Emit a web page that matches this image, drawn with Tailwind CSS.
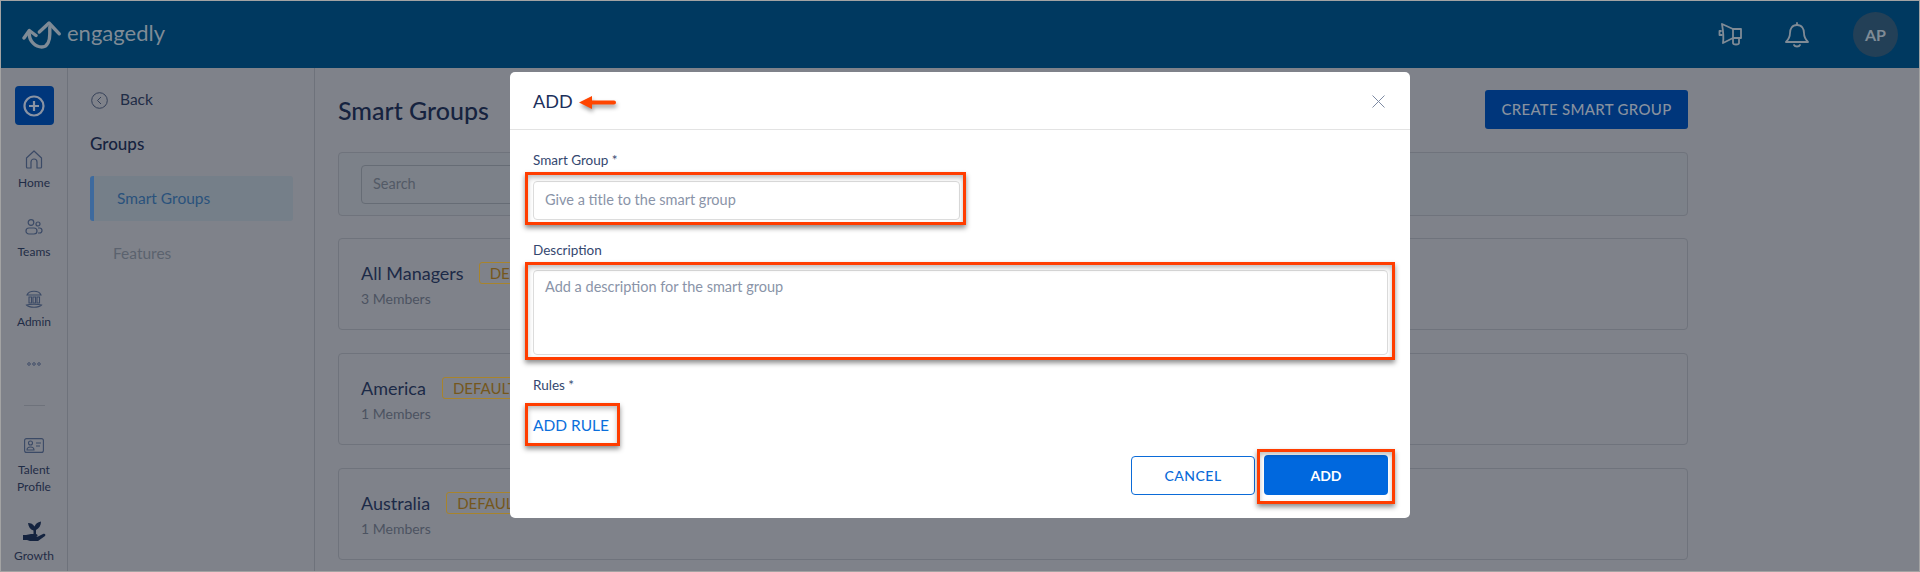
<!DOCTYPE html>
<html lang="en">
<head>
  <script src="https://cdn.jsdelivr.net/npm/@tailwindcss/browser@4"></script>
  <meta charset="UTF-8" />
  <title>Smart Groups</title>
</head>
<body class="bg-[#7f828a] font-['Lato',sans-serif] text-[#1c2a47]">

<div class="relative w-[1920px] h-[572px] overflow-hidden flex flex-col border border-[#a3a3a3] bg-[#7f828a]">

  <!-- Top bar -->
  <header class="h-[67px] shrink-0 bg-[#003960] flex items-center justify-between">
    <div class="flex items-center pl-[21px]">
      <svg class="w-[40px] h-[30px]" viewBox="0 0 40 30" fill="none" stroke="#7f8b96" stroke-width="3.4" stroke-linecap="round" stroke-linejoin="round">
        <path d="M2 18l5.300-7.500 6.700 5" />
        <path d="M7.300 14c0 7 6 13 12.500 13 6 0 8-7 8-13V7" />
        <path d="M17.300 12L27 3l10.300 10.800" />
      </svg>
      <span class="ml-[5px] text-[22px] leading-none text-[#7f8b96] pb-[3px]">engagedly</span>
    </div>
    <div class="flex items-center">
      <svg class="w-[26px] h-[26px] mr-[41px]" viewBox="0 0 26 26" fill="none" stroke="#7f8b96" stroke-width="1.800" stroke-linejoin="round" stroke-linecap="round">
        <path d="M4 2l11 5h8v9h-8l-10 5c1-6 0-13-1-19z" />
        <path d="M15 7v9" />
        <path d="M15 17v4c0 2 6 2 6 0v-5" />
        <path d="M3 9H1.500v4H4" />
      </svg>
      <svg class="w-[24px] h-[26px] mr-[44px]" viewBox="0 0 24 26" fill="none" stroke="#7f8b96" stroke-width="1.800" stroke-linejoin="round" stroke-linecap="round">
        <path d="M12 3c-5 0-7 4-7 8 0 5-2 7-4 9h22c-2-2-4-4-4-9 0-4-2-8-7-8z" />
        <path d="M12 1v2" />
        <path d="M9 23c1 2 5 2 6 0" />
      </svg>
      <div class="w-[45px] h-[45px] mr-[21px] rounded-full bg-[#234057] flex items-center justify-center text-[16px] font-bold text-[#7f8b96]">AP</div>
    </div>
  </header>

  <div class="flex flex-1 min-h-0">
    <!-- Icon rail -->
    <nav class="w-[67px] shrink-0 border-r border-[#6e727b] flex flex-col items-center text-[12px] leading-[17px] text-[#1f2c46]">
      <div class="w-[39px] h-[39px] mt-[18px] rounded-[4px] bg-[#00367b] flex items-center justify-center">
        <svg class="w-[22px] h-[22px]" viewBox="0 0 22 22" fill="none" stroke="#8a93a3" stroke-width="2.200">
          <circle cx="11" cy="11" r="9.500" />
          <path d="M11 6v10M6 11h10" />
        </svg>
      </div>
      <svg class="w-[18px] h-[19px] mt-[25px]" viewBox="0 0 18 19" fill="none" stroke="#3b4a66" stroke-width="1.200" stroke-linejoin="round">
        <path d="M1.500 8L9 1l7.500 7v9a1 1 0 0 1-1 1H12v-6a3 3 0 0 0-6 0v6H2.500a1 1 0 0 1-1-1z" />
      </svg>
      <span class="mt-[5px]">Home</span>
      <svg class="w-[18px] h-[16px] mt-[28px]" viewBox="0 0 18 16" fill="none" stroke="#3b4a66" stroke-width="1.200">
        <circle cx="6" cy="3.500" r="2.800" />
        <circle cx="13" cy="5" r="2" />
        <rect x="1" y="9" width="11" height="6" rx="3" />
        <path d="M13 9h1.500a2.500 2.500 0 0 1 0 5H13" />
      </svg>
      <span class="mt-[8px]">Teams</span>
      <svg class="w-[18px] h-[18px] mt-[30px]" viewBox="0 0 18 18" fill="none" stroke="#3b4a66" stroke-width="1.100">
        <path d="M2 5c2-5 12-5 14 0z" />
        <path d="M4 7v6h2.500V7zM8 7v6h2.500V7zM12 7v6h2.500V7z" />
        <path d="M1.500 15c3 3 12 3 15 0-3-1-12-1-15 0z" />
      </svg>
      <span class="mt-[5px]">Admin</span>
      <svg class="w-[14px] h-[4px] mt-[32px]" viewBox="0 0 14 4" fill="none" stroke="#3b4a66" stroke-width="0.900">
        <circle cx="2" cy="2" r="1.300" />
        <circle cx="7" cy="2" r="1.300" />
        <circle cx="12" cy="2" r="1.300" />
      </svg>
      <div class="w-[21px] h-px mt-[39px] bg-[#6e727b]"></div>
      <svg class="w-[20px] h-[15px] mt-[32px]" viewBox="0 0 20 15" fill="none" stroke="#3b4a66" stroke-width="1.100">
        <rect x="0.600" y="0.600" width="18.800" height="13.800" rx="2" />
        <circle cx="6.500" cy="5" r="2" />
        <path d="M3 12c0-4 7-4 7 0z" />
        <path d="M12 5h5M12 8h4" />
      </svg>
      <span class="mt-[8px] text-center">Talent<br />Profile</span>
      <svg class="w-[23px] h-[21px] mt-[26px]" viewBox="0 0 23 21" fill="#14233f">
        <path d="M10.500 13V9.500C7 8.500 5.500 5.500 5 2c3 0 5 1 6.500 3.500C12.500 3 14.500 1 18 0.500c0 4-2 7-5 8.500v4z" />
        <path d="M0 14h3l5-1h5c2 0 2 3 0 3h-3 4l6-3c2-1 3 1 2 2l-7 5H7l-3-1H0z" />
      </svg>
      <span class="mt-[5px]">Growth</span>
    </nav>

    <!-- Secondary menu -->
    <aside class="w-[247px] shrink-0 border-r border-[#6e727b] pl-[22px] pr-[21px] text-[15.5px]">
      <div class="flex items-center mt-[23px] h-[18px]">
        <svg class="w-[17px] h-[17px] ml-px" viewBox="0 0 17 17" fill="none" stroke="#2e3a52" stroke-width="0.900">
          <circle cx="8.500" cy="8.500" r="7.800" />
          <path d="M10 5L6.500 8.500 10 12" />
        </svg>
        <span class="ml-[12px] text-[#1f2c46]">Back</span>
      </div>
      <h2 class="mt-[23px] text-[17px] leading-[24px] font-medium text-[#16233f]">Groups</h2>
      <div class="mt-[20px] h-[45px] flex items-center rounded-[3px] border-l-[4px] border-[#3d6a9e] bg-[#757f89] pl-[23px] text-[#2a527c]">Smart Groups</div>
      <div class="mt-[21px] pl-[23px] text-[#5b626e]">Features</div>
    </aside>

    <!-- Main content -->
    <main class="flex-1 pl-[23px] pr-[231px] min-w-0">
      <div class="flex items-center justify-between mt-[22px] h-[39px]">
        <h1 class="text-[25px] font-medium text-[#16233f] pt-[3px]">Smart Groups</h1>
        <button class="w-[203px] h-[39px] rounded-[3px] bg-[#00367b] text-[15px] font-medium tracking-[0.3px] text-[#87919f]">CREATE SMART GROUP</button>
      </div>
      <div class="mt-[23px] h-[64px] rounded-[4px] border border-[#6f737c] bg-[#7c8189] pl-[22px] flex items-center">
        <div class="w-[300px] h-[39px] rounded-[4px] border border-[#666c75] pl-[11px] flex items-center text-[14.5px] text-[#535a66]">Search</div>
      </div>
      <div class="mt-[22px] h-[92px] rounded-[4px] border border-[#6f737c] pl-[22px] pt-[22px]">
        <div class="flex items-center h-[24px]">
          <span class="text-[18px] text-[#1c2a47]">All Managers</span>
          <span class="ml-[15px] h-[22px] px-[10px] flex items-center rounded-[3px] border border-[#a8842c] text-[15px] text-[#75571c]">DEFAULT</span>
        </div>
        <div class="mt-[5px] text-[14px] leading-[18px] text-[#4c5361]">3 Members</div>
      </div>
      <div class="mt-[23px] h-[92px] rounded-[4px] border border-[#6f737c] pl-[22px] pt-[22px]">
        <div class="flex items-center h-[24px]">
          <span class="text-[18px] text-[#1c2a47]">America</span>
          <span class="ml-[16px] h-[22px] px-[10px] flex items-center rounded-[3px] border border-[#a8842c] text-[15px] text-[#75571c]">DEFAULT</span>
        </div>
        <div class="mt-[5px] text-[14px] leading-[18px] text-[#4c5361]">1 Members</div>
      </div>
      <div class="mt-[23px] h-[92px] rounded-[4px] border border-[#6f737c] pl-[22px] pt-[22px]">
        <div class="flex items-center h-[24px]">
          <span class="text-[18px] text-[#1c2a47]">Australia</span>
          <span class="ml-[16px] h-[22px] px-[10px] flex items-center rounded-[3px] border border-[#a8842c] text-[15px] text-[#75571c]">DEFAULT</span>
        </div>
        <div class="mt-[5px] text-[14px] leading-[18px] text-[#4c5361]">1 Members</div>
      </div>
    </main>
  </div>

  <!-- Add dialog -->
  <div class="absolute left-[509px] top-[71px] w-[900px] h-[446px] rounded-[5px] bg-white flex flex-col">
    <div class="h-[58px] shrink-0 border-b border-[#e3e3e3] pl-[23px] pr-[25px] pt-[2px] flex items-center justify-between">
      <h3 class="text-[18px] text-[#1b2f5c]">ADD</h3>
      <svg class="w-[13px] h-[13px]" viewBox="0 0 13 13" fill="none" stroke="#7d8aa3" stroke-width="1">
        <path d="M0.500 0.500l12 12M12.500 0.500l-12 12" />
      </svg>
    </div>
    <div class="pl-[23px] pr-[22px] flex flex-col text-[14.5px]">
      <label class="mt-[20px] leading-[20px] text-[13.5px] text-[#34476f]">Smart Group *</label>
      <div class="mt-[11px] w-[427px] h-[39px] rounded-[4px] border border-[#dcdcdc] pl-[11px] pb-px flex items-center text-[#8a94a8]">Give a title to the smart group</div>
      <label class="mt-[20px] leading-[20px] text-[13.5px] text-[#34476f]">Description</label>
      <div class="mt-[10px] h-[85px] rounded-[4px] border border-[#dcdcdc] pl-[11px] pt-[5px] text-[#8a94a8]">Add a description for the smart group</div>
      <label class="mt-[20px] leading-[20px] text-[13.5px] text-[#34476f]">Rules *</label>
      <div class="mt-[20px] leading-[20px] text-[15.5px] text-[#0b6fdc]">ADD RULE</div>
      <div class="flex justify-end items-center mt-[20px] gap-[9px]">
        <button class="w-[124px] h-[39px] rounded-[4px] border border-[#0b6bd8] text-[14px] font-medium tracking-[0.5px] text-[#0b6bd8]">CANCEL</button>
        <button class="w-[124px] h-[40px] rounded-[4px] bg-[#0068de] text-[14px] font-bold text-white">ADD</button>
      </div>
    </div>
    <!-- Red callouts drawn on top of the dialog -->
    <svg class="absolute left-[68px] top-[23px] w-[38px] h-[15px] drop-shadow-[1px_3px_2px_rgba(0,0,0,0.4)]" viewBox="0 0 38 15">
      <path d="M1 7.500L14 1v4.500h22a2 2 0 0 1 0 4H14V14z" fill="#ff4500" />
    </svg>
    <div class="absolute left-[15px] top-[100px] w-[441px] h-[53px] border-[3px] border-[#ff3d00] shadow-[0_3px_5px_rgba(0,0,0,0.45),inset_0_3px_5px_rgba(0,0,0,0.25)]"></div>
    <div class="absolute left-[15px] top-[190px] w-[870px] h-[98px] border-[3px] border-[#ff3d00] shadow-[0_3px_5px_rgba(0,0,0,0.45),inset_0_3px_5px_rgba(0,0,0,0.25)]"></div>
    <div class="absolute left-[15px] top-[331px] w-[95px] h-[43px] border-[3px] border-[#ff3d00] shadow-[0_3px_5px_rgba(0,0,0,0.45),inset_0_3px_5px_rgba(0,0,0,0.25)]"></div>
    <div class="absolute left-[747px] top-[377px] w-[138px] h-[55px] border-[3px] border-[#ff3d00] shadow-[0_3px_5px_rgba(0,0,0,0.45),inset_0_3px_5px_rgba(0,0,0,0.25)]"></div>
  </div>
</div>

</body>
</html>
